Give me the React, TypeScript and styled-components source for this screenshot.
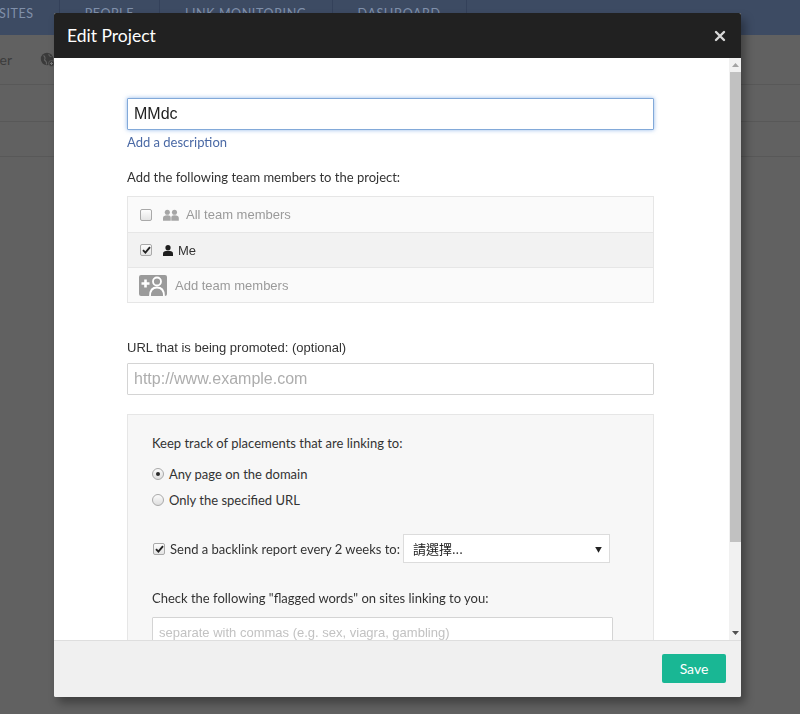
import React from "react";
import styled, { createGlobalStyle } from "styled-components";

const GlobalStyle = createGlobalStyle`
  html, body { margin: 0; padding: 0; }
  body {
    width: 800px;
    height: 714px;
    overflow: hidden;
    background: #616161;
    font-family: "Liberation Sans", Arial, sans-serif;
  }
  * { box-sizing: border-box; }
`;

const proxima = `Lato, "Open Sans", "Liberation Sans", sans-serif`;
const arial = `"Liberation Sans", Arial, sans-serif`;

/* ---------- dimmed page behind the modal ---------- */

const Page = styled.div`
  width: 800px;
  height: 714px;
  background: #616161;
  overflow: hidden;
`;

const NavBar = styled.nav`
  height: 35px;
  background: #3d4b63;
  display: flex;
  margin-left: -26px;
`;

const NavTab = styled.div`
  padding: 6px 25px 0 25px;
  line-height: 16px;
  font-family: ${proxima};
  font-size: 12.5px;
  letter-spacing: 0.6px;
  color: #8090aa;
  border-right: 1px solid #34415a;
  white-space: nowrap;
`;

const PageToolbar = styled.div`
  height: 50px;
  display: flex;
  align-items: center;
  gap: 28px;
  border-bottom: 1px solid #585858;
  font-family: ${proxima};
  font-size: 14px;
  color: #3c3c3c;
`;

const ToolbarText = styled.span`
  margin-left: -20px;
`;

const PageRow = styled.div<{ $h: number }>`
  height: ${(p) => p.$h}px;
  border-bottom: 1px solid #585858;
`;

/* ---------- modal ---------- */

const Modal = styled.div`
  position: fixed;
  left: 54px;
  top: 13px;
  width: 687px;
  height: 684px;
  display: flex;
  flex-direction: column;
  background: #fff;
  border-radius: 2px;
  box-shadow: 4px 6px 10px rgba(0, 0, 0, 0.35);
  overflow: hidden;
`;

const Header = styled.div`
  height: 45px;
  flex: none;
  background: #212121;
  display: flex;
  align-items: center;
  justify-content: space-between;
  padding: 0 15px 0 13px;
`;

const Title = styled.h4`
  margin: 0;
  font-family: ${proxima};
  font-weight: 400;
  font-size: 17.5px;
  color: #fff;
`;

const CloseButton = styled.button`
  border: 0;
  background: none;
  padding: 0;
  width: 12px;
  height: 12px;
  display: flex;
  cursor: pointer;
`;

const Body = styled.div`
  flex: 1;
  display: flex;
  min-height: 0;
  overflow: hidden;
`;

const Content = styled.div`
  flex: 1;
  padding: 40px 75px 0 73px;
  display: flex;
  flex-direction: column;
  & > * {
    flex-shrink: 0;
  }
`;

const TextInput = styled.input<{ $focus?: boolean; $size?: number }>`
  display: block;
  flex: none;
  height: ${(p) => (p.$size === 13 ? 30 : 32)}px;
  width: 100%;
  border: 1px solid ${(p) => (p.$focus ? "#82a9d9" : "#d4d4d4")};
  box-shadow: ${(p) => (p.$focus ? "0 0 4px rgba(102,155,225,0.7)" : "none")};
  border-radius: 1px;
  padding: 0 6px;
  font-family: ${arial};
  font-size: ${(p) => p.$size ?? 16}px;
  color: #222;
  background: #fff;
  outline: none;
  &::placeholder {
    color: ${(p) => (p.$size === 13 ? "#c2c2c2" : "#adadad")};
  }
`;

const LinkText = styled.a`
  margin-top: 3px;
  line-height: 18px;
  font-family: ${proxima};
  font-size: 13px;
  color: #4a69a5;
  text-decoration: none;
  align-self: flex-start;
`;

const Label = styled.div<{ $mt: number; $arial?: boolean }>`
  margin-top: ${(p) => p.$mt}px;
  line-height: 18px;
  font-family: ${(p) => (p.$arial ? arial : proxima)};
  font-size: 13px;
  color: #333;
`;

const FieldWrap = styled.div<{ $mt: number; $w?: number }>`
  margin-top: ${(p) => p.$mt}px;
  width: ${(p) => (p.$w ? `${p.$w}px` : "100%")};
  flex: none;
`;

const TeamBox = styled.div`
  margin-top: 10px;
  border: 1px solid #e6e6e6;
  background: #fafafa;
`;

const TeamRow = styled.div<{ $h: number; $active?: boolean; $first?: boolean }>`
  height: ${(p) => p.$h}px;
  display: flex;
  align-items: center;
  padding-left: 12px;
  border-top: ${(p) => (p.$first ? "0" : "1px solid #e6e6e6")};
  background: ${(p) => (p.$active ? "#f2f2f2" : "#fafafa")};
  font-family: ${arial};
  font-size: 13px;
  color: ${(p) => (p.$active ? "#333" : "#9a9a9a")};
`;

const IconSlot = styled.span<{ $ml: number; $mr: number }>`
  display: inline-flex;
  margin-left: ${(p) => p.$ml}px;
  margin-right: ${(p) => p.$mr}px;
`;

const CheckBox = styled.span`
  width: 12px;
  height: 12px;
  flex: none;
  border: 1px solid #a9a9a9;
  border-radius: 2px;
  background: linear-gradient(#fdfdfd, #e4e4e4);
  display: inline-flex;
  align-items: center;
  justify-content: center;
`;

const Radio = styled.span<{ $checked?: boolean }>`
  width: 12px;
  height: 12px;
  flex: none;
  border: 1px solid #a9a9a9;
  border-radius: 50%;
  background: linear-gradient(#fbfbfb, #dedede);
  display: inline-flex;
  align-items: center;
  justify-content: center;
  &::after {
    content: "";
    display: ${(p) => (p.$checked ? "block" : "none")};
    width: 4px;
    height: 4px;
    border-radius: 50%;
    background: #2a2a2a;
  }
`;

const TrackBox = styled.div`
  margin-top: 19px;
  border: 1px solid #e6e6e6;
  background: #f7f7f7;
  padding: 19px 40px 40px 24px;
  display: flex;
  flex-direction: column;
  & > * {
    flex-shrink: 0;
  }
`;

const OptionRow = styled.label<{ $mt: number }>`
  margin-top: ${(p) => p.$mt}px;
  display: flex;
  align-items: center;
  gap: 5px;
  line-height: 18px;
  font-family: ${proxima};
  font-size: 13px;
  color: #333;
`;

const SendRow = styled.div`
  margin-top: 25px;
  display: flex;
  align-items: center;
  gap: 5px;
  font-family: ${proxima};
  font-size: 13px;
  color: #333;
  padding-left: 1px;
`;

const SelectBox = styled.div`
  margin-left: -2px;
  width: 207px;
  height: 29px;
  flex: none;
  background: #fff;
  border: 1px solid #dcdcdc;
  display: flex;
  align-items: center;
  justify-content: space-between;
  padding: 0 7px 0 9px;
  font-family: "Noto Sans CJK TC", ${arial};
  font-size: 13px;
  color: #222;
`;

const SelectArrow = styled.span`
  font-size: 7px;
  color: #222;
`;

const ScrollBar = styled.div`
  width: 12px;
  flex: none;
  display: flex;
  flex-direction: column;
  background: #f1f1f1;
`;

const ScrollButton = styled.div<{ $h: number }>`
  height: ${(p) => p.$h}px;
  flex: none;
  display: flex;
  align-items: center;
  justify-content: center;
  background: #f1f1f1;
`;

const ScrollThumb = styled.div`
  height: 470px;
  flex: none;
  background: #c1c1c1;
  margin: 0 0 0 1px;
`;

const ScrollTrack = styled.div`
  flex: 1;
`;

const Footer = styled.div`
  height: 57px;
  flex: none;
  background: #f0f0f0;
  border-top: 1px solid #dedede;
  display: flex;
  justify-content: flex-end;
  align-items: flex-start;
  padding: 13px 15px 0 0;
`;

const SaveButton = styled.button`
  width: 64px;
  height: 29px;
  border: 0;
  border-radius: 2px;
  background: #19b794;
  color: #fff;
  font-family: ${proxima};
  font-size: 14px;
  cursor: pointer;
`;

/* ---------- icons ---------- */

const CheckMark = () => (
  <svg width="9" height="8" viewBox="0 0 9 8">
    <path d="M1 4.2 L3.4 6.6 L8 1.2" fill="none" stroke="#222" strokeWidth="1.9" />
  </svg>
);

const UsersIcon = () => (
  <svg width="16" height="12" viewBox="0 0 17 12">
    <g fill="#a6a6a6">
      <circle cx="4.6" cy="3" r="2.7" />
      <path d="M0 12 V9.2 C0 7.2 1.6 6.3 4.6 6.3 C7.6 6.3 8.2 7.2 8.2 9.2 V12 Z" />
      <circle cx="12.2" cy="3" r="2.7" />
      <path d="M8.8 12 V9.2 C8.8 7.2 9.4 6.3 12.2 6.3 C15.2 6.3 16.8 7.2 16.8 9.2 V12 Z" />
    </g>
  </svg>
);

const UserIcon = () => (
  <svg width="10" height="11" viewBox="0 0 10 11">
    <g fill="#1e1e1e">
      <circle cx="5" cy="2.7" r="2.6" />
      <path d="M0 11 V8.6 C0 6.6 1.7 5.8 5 5.8 C8.3 5.8 10 6.6 10 8.6 V11 Z" />
    </g>
  </svg>
);

const AddUserIcon = () => (
  <svg width="28" height="21" viewBox="0 0 28 21">
    <rect x="0" y="0" width="28" height="21" rx="2" fill="#9b9b9b" />
    <path d="M6.5 4.5 V12.5 M2.5 8.5 H10.5" stroke="#fff" strokeWidth="2.6" />
    <circle cx="18" cy="6.5" r="4" fill="none" stroke="#fff" strokeWidth="1.8" />
    <path d="M11 21 C11 15 13.5 12.5 18 12.5 C22.5 12.5 25 15 25 21" fill="none" stroke="#fff" strokeWidth="1.8" />
  </svg>
);

const CloseIcon = () => (
  <svg width="12" height="12" viewBox="0 0 12 12">
    <path d="M2 2 L10 10 M10 2 L2 10" stroke="#d8d8d8" strokeWidth="2.4" strokeLinecap="round" />
  </svg>
);

const GlobeIcon = () => (
  <svg width="15" height="15" viewBox="0 0 15 15">
    <circle cx="7" cy="7" r="6.2" fill="#3a3a3a" />
    <path d="M3.5 3.5 C5 4.5 5.5 6 4.5 8 C6 9 7 10 6.5 12.5 M9 2 C8.5 3.5 10 4.5 11.5 4.5" stroke="#616161" strokeWidth="1.1" fill="none" />
    <circle cx="11.5" cy="11.5" r="3" fill="#3a3a3a" stroke="#616161" strokeWidth="0.8" />
    <path d="M11.5 9.9 V13.1 M9.9 11.5 H13.1" stroke="#777" strokeWidth="1" />
  </svg>
);

const ArrowUp = () => (
  <svg width="7" height="4" viewBox="0 0 7 4">
    <path d="M0 4 L3.5 0 L7 4 Z" fill="#a3a3a3" />
  </svg>
);

const ArrowDown = () => (
  <svg width="7" height="4" viewBox="0 0 7 4">
    <path d="M0 0 L3.5 4 L7 0 Z" fill="#505050" />
  </svg>
);

export default function App() {
  return (
    <>
      <GlobalStyle />
      <Page>
        <NavBar>
          <NavTab>SITES</NavTab>
          <NavTab>PEOPLE</NavTab>
          <NavTab>LINK MONITORING</NavTab>
          <NavTab>DASHBOARD</NavTab>
        </NavBar>
        <PageToolbar>
          <ToolbarText>Filter</ToolbarText>
          <GlobeIcon />
        </PageToolbar>
        <PageRow $h={37} />
        <PageRow $h={35} />
      </Page>

      <Modal>
        <Header>
          <Title>Edit Project</Title>
          <CloseButton aria-label="Close">
            <CloseIcon />
          </CloseButton>
        </Header>

        <Body>
          <Content>
            <TextInput $focus defaultValue="MMdc" />
            <LinkText href="#">Add a description</LinkText>

            <Label $mt={17}>Add the following team members to the project:</Label>
            <TeamBox>
              <TeamRow $h={35} $first>
                <CheckBox />
                <IconSlot $ml={11} $mr={7}>
                  <UsersIcon />
                </IconSlot>
                All team members
              </TeamRow>
              <TeamRow $h={35} $active>
                <CheckBox>
                  <CheckMark />
                </CheckBox>
                <IconSlot $ml={11} $mr={5}>
                  <UserIcon />
                </IconSlot>
                Me
              </TeamRow>
              <TeamRow $h={35}>
                <IconSlot $ml={-1} $mr={8}>
                  <AddUserIcon />
                </IconSlot>
                Add team members
              </TeamRow>
            </TeamBox>

            <Label $mt={36} $arial>
              URL that is being promoted: (optional)
            </Label>
            <FieldWrap $mt={6}>
              <TextInput placeholder="http://www.example.com" />
            </FieldWrap>

            <TrackBox>
              <Label $mt={0}>Keep track of placements that are linking to:</Label>
              <OptionRow $mt={13}>
                <Radio $checked />
                Any page on the domain
              </OptionRow>
              <OptionRow $mt={8}>
                <Radio />
                Only the specified URL
              </OptionRow>
              <SendRow>
                <CheckBox>
                  <CheckMark />
                </CheckBox>
                <span>Send a backlink report every 2 weeks to:</span>
                <SelectBox>
                  請選擇...
                  <SelectArrow>▼</SelectArrow>
                </SelectBox>
              </SendRow>
              <Label $mt={26}>Check the following "flagged words" on sites linking to you:</Label>
              <FieldWrap $mt={10} $w={461}>
                <TextInput $size={13} placeholder="separate with commas (e.g. sex, viagra, gambling)" />
              </FieldWrap>
            </TrackBox>
          </Content>

          <ScrollBar>
            <ScrollButton $h={14}>
              <ArrowUp />
            </ScrollButton>
            <ScrollThumb />
            <ScrollTrack />
            <ScrollButton $h={15}>
              <ArrowDown />
            </ScrollButton>
          </ScrollBar>
        </Body>

        <Footer>
          <SaveButton>Save</SaveButton>
        </Footer>
      </Modal>
    </>
  );
}
